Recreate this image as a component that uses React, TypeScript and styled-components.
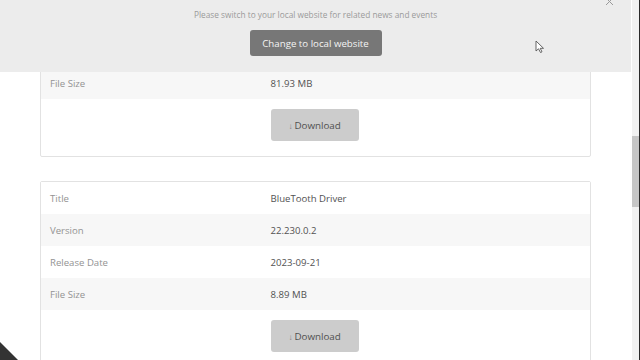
import React, { useLayoutEffect, useRef } from "react";
import styled, { createGlobalStyle } from "styled-components";

const Global = createGlobalStyle`
  html, body { margin: 0; padding: 0; background: #fff; }
  body { font-family: "Open Sans", "Liberation Sans", sans-serif; }
  * { box-sizing: border-box; }
`;

const Frame = styled.div`
  position: relative;
  width: 640px;
  height: 360px;
  overflow: hidden;
  display: flex;
  border-right: 1px solid #2a2a2a;
`;

const Scroller = styled.div`
  flex: 1;
  height: 100%;
  overflow: hidden;
`;

const ScrollTrack = styled.div`
  width: 7px;
  height: 100%;
  background: #f1f1f1;
  position: relative;
`;

const ScrollThumb = styled.div`
  position: absolute;
  left: 0;
  width: 7px;
  background: #c6c6c6;
`;

const Page = styled.div`
  display: flex;
  flex-direction: column;
  gap: 24px;
  padding: 24px 41px 60px 40px;
`;

const Card = styled.div`
  border: 1px solid #e2e2e2;
  border-radius: 2px;
  background: #fff;
`;

const Table = styled.div`
  display: flex;
  flex-direction: column;
`;

const Row = styled.div<{ $striped?: boolean }>`
  display: grid;
  grid-template-columns: 40% 60%;
  height: 32px;
  align-items: center;
  background: ${(p) => (p.$striped ? "#f7f7f7" : "#fff")};
  font-size: 9.6px;
`;

const Label = styled.div`
  padding-left: 9px;
  color: #939393;
`;

const Value = styled.div`
  padding-left: 10px;
  color: #525252;
`;

const Actions = styled.div`
  display: grid;
  grid-template-columns: 40% 60%;
  padding: 10px 0 15px;
`;

const DownloadButton = styled.button`
  grid-column: 2;
  margin-left: 10px;
  width: 88px;
  height: 32px;
  border: none;
  border-radius: 3px;
  background: #cccccc;
  color: #505050;
  font-family: "Open Sans", "Liberation Sans", sans-serif;
  font-size: 9.8px;
  display: flex;
  align-items: center;
  justify-content: center;
  padding: 0;
`;

const Arrow = styled.span`
  font-size: 8px;
  color: #808080;
  margin-right: 2px;
`;

const Banner = styled.div`
  position: absolute;
  top: 0;
  left: 0;
  right: 8px;
  height: 72px;
  background: #ececec;
  display: flex;
  flex-direction: column;
  align-items: center;
  padding-top: 9px;
  gap: 9px;
`;

const BannerText = styled.div`
  font-size: 8.3px;
  color: #9a9a9a;
  line-height: 12px;
`;

const LocalButton = styled.button`
  width: 132px;
  height: 26px;
  border: none;
  border-radius: 3px;
  background: #777777;
  color: #f4f4f4;
  font-family: "Open Sans", "Liberation Sans", sans-serif;
  font-size: 9.7px;
  padding: 0;
`;

const Close = styled.svg`
  position: absolute;
  top: -1px;
  right: 24px;
`;

const Cursor = styled.svg`
  position: absolute;
  left: 535px;
  top: 40px;
`;

const Corner = styled.svg`
  position: absolute;
  left: 0;
  bottom: 0;
`;

type Driver = { title: string; version: string; date: string; size: string };

const drivers: Driver[] = [
  { title: "Chipset Driver", version: "10.1.19199.8340", date: "2023-08-14", size: "5.12 MB" },
  { title: "Audio Driver", version: "6.0.9468.1", date: "2023-07-02", size: "61.40 MB" },
  { title: "LAN Driver", version: "10.64.0410.2023", date: "2023-06-18", size: "12.07 MB" },
  { title: "VGA Driver", version: "31.0.101.4575", date: "2023-09-05", size: "81.93 MB" },
  { title: "BlueTooth Driver", version: "22.230.0.2", date: "2023-09-21", size: "8.89 MB" },
  { title: "WLAN Driver", version: "22.230.0.8", date: "2023-09-21", size: "36.52 MB" },
  { title: "Card Reader Driver", version: "10.0.22621.21354", date: "2023-05-11", size: "14.33 MB" },
  { title: "Touchpad Driver", version: "19.5.6.21", date: "2023-04-27", size: "3.75 MB" },
];

const DriverCard = ({ d }: { d: Driver }) => (
  <Card>
    <Table>
      <Row>
        <Label>Title</Label>
        <Value>{d.title}</Value>
      </Row>
      <Row $striped>
        <Label>Version</Label>
        <Value>{d.version}</Value>
      </Row>
      <Row>
        <Label>Release Date</Label>
        <Value>{d.date}</Value>
      </Row>
      <Row $striped>
        <Label>File Size</Label>
        <Value>{d.size}</Value>
      </Row>
    </Table>
    <Actions>
      <DownloadButton>
        <Arrow>↓</Arrow>Download
      </DownloadButton>
    </Actions>
  </Card>
);

const SCROLL_TOP = 687;
const CONTENT_H = 1825;
const VIEW_H = 360;

export default function App() {
  const ref = useRef<HTMLDivElement>(null);
  useLayoutEffect(() => {
    if (ref.current) ref.current.scrollTop = SCROLL_TOP;
  }, []);
  const thumbH = (VIEW_H * VIEW_H) / CONTENT_H;
  const thumbTop = (SCROLL_TOP / (CONTENT_H - VIEW_H)) * (VIEW_H - thumbH);
  return (
    <>
      <Global />
      <Frame>
        <Scroller ref={ref}>
          <Page>
            {drivers.map((d) => (
              <DriverCard key={d.title} d={d} />
            ))}
          </Page>
        </Scroller>
        <ScrollTrack>
          <ScrollThumb style={{ top: thumbTop, height: thumbH }} />
        </ScrollTrack>
        <Banner>
          <BannerText>Please switch to your local website for related news and events</BannerText>
          <LocalButton>Change to local website</LocalButton>
        </Banner>
        <Close width="10" height="8" viewBox="0 0 10 8">
          <path d="M1 -1 L8 6 M8 -1 L1 6" stroke="#9a9a9a" strokeWidth="1" fill="none" />
        </Close>
        <Cursor width="10" height="14" viewBox="0 0 10 14">
          <path d="M1 1 L1 11 L3.5 8.8 L5.5 12.5 L7 11.8 L5.2 8.3 L8.5 8.3 Z" fill="#fff" stroke="#555" strokeWidth="0.9" />
        </Cursor>
        <Corner width="18" height="18" viewBox="0 0 18 18">
          <path d="M0 0 L18 18 L0 18 Z" fill="#333" />
        </Corner>
      </Frame>
    </>
  );
}
